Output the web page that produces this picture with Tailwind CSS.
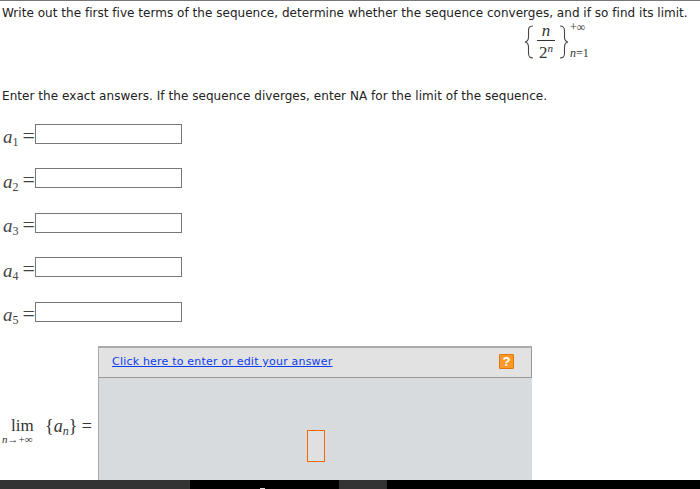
<!DOCTYPE html>
<html><head><script src="https://cdn.jsdelivr.net/npm/@tailwindcss/browser@4"></script></head>
<body class="m-0 bg-white">
<div class="w-[700px] h-[489px] overflow-hidden flex flex-col font-['DejaVu_Sans',sans-serif] text-[12px] text-[#222] tracking-[0.05px]">
  <div class="h-px bg-[#777] shrink-0"></div>
  <p class="pl-[2px] h-[21px] pt-[5px] leading-[15px] whitespace-nowrap tracking-[0.03px]">Write out the first five terms of the sequence, determine whether the sequence converges, and if so find its limit.</p>
  <div class="h-[40px] pl-[524px] flex items-start font-['Liberation_Serif',serif] text-[#333] tracking-normal shrink-0">
    <svg class="w-[10px] h-[34px] mt-[3px] shrink-0" viewBox="0 0 10 34" fill="none" stroke="#444" stroke-width="1.1"><path d="M9 1C5 1 4.5 3 4.5 6V12C4.5 15 3.5 16.5 1 17C3.5 17.5 4.5 19 4.5 22V28C4.5 31 5 33 9 33"/></svg>
    <span class="flex flex-col items-center w-[18px] text-[17px] leading-[16px] ml-[3px] mt-[1px] shrink-0">
      <i>n</i>
      <span class="border-t border-[#333] w-[18px] text-center mt-[1px] pt-[4px] whitespace-nowrap">2<i class="text-[11px] align-[6px] leading-[0]">n</i></span>
    </span>
    <svg class="w-[10px] h-[34px] mt-[3px] ml-[4px] shrink-0" viewBox="0 0 10 34" fill="none" stroke="#444" stroke-width="1.1"><path d="M1 1C5 1 5.5 3 5.5 6V12C5.5 15 6.5 16.5 9 17C6.5 17.5 5.5 19 5.5 22V28C5.5 31 5 33 1 33"/></svg>
    <span class="flex flex-col text-[12px] leading-[12px] h-[38px] -mt-[1px] justify-between whitespace-nowrap ml-[1px] shrink-0">
      <span>+∞</span><span><i>n</i>=1</span>
    </span>
  </div>
  <p class="pl-[2px] mt-[27px] h-[15px] leading-[15px] whitespace-nowrap">Enter the exact answers. If the sequence diverges, enter NA for the limit of the sequence.</p>
  <div class="mt-[19.75px] flex flex-col gap-[24.5px] shrink-0 tracking-normal">
    <div class="flex items-center h-[20px] font-['Liberation_Serif',serif] text-[#444] text-[19px]"><span class="w-[22px] pl-[3px] mt-[7px]"><i>a</i><sub class="text-[12px] leading-[0]">1</sub></span><span class="w-[13px] pl-[1px] mt-[4px] text-[20px] scale-x-[1.1]">=</span><div class="w-[147px] h-[20px] border border-[#777] bg-white"></div></div>
    <div class="flex items-center h-[20px] font-['Liberation_Serif',serif] text-[#444] text-[19px]"><span class="w-[22px] pl-[3px] mt-[7px]"><i>a</i><sub class="text-[12px] leading-[0]">2</sub></span><span class="w-[13px] pl-[1px] mt-[4px] text-[20px] scale-x-[1.1]">=</span><div class="w-[147px] h-[20px] border border-[#777] bg-white"></div></div>
    <div class="flex items-center h-[20px] font-['Liberation_Serif',serif] text-[#444] text-[19px]"><span class="w-[22px] pl-[3px] mt-[7px]"><i>a</i><sub class="text-[12px] leading-[0]">3</sub></span><span class="w-[13px] pl-[1px] mt-[4px] text-[20px] scale-x-[1.1]">=</span><div class="w-[147px] h-[20px] border border-[#777] bg-white"></div></div>
    <div class="flex items-center h-[20px] font-['Liberation_Serif',serif] text-[#444] text-[19px]"><span class="w-[22px] pl-[3px] mt-[7px]"><i>a</i><sub class="text-[12px] leading-[0]">4</sub></span><span class="w-[13px] pl-[1px] mt-[4px] text-[20px] scale-x-[1.1]">=</span><div class="w-[147px] h-[20px] border border-[#777] bg-white"></div></div>
    <div class="flex items-center h-[20px] font-['Liberation_Serif',serif] text-[#444] text-[19px]"><span class="w-[22px] pl-[3px] mt-[7px]"><i>a</i><sub class="text-[12px] leading-[0]">5</sub></span><span class="w-[13px] pl-[1px] mt-[4px] text-[20px] scale-x-[1.1]">=</span><div class="w-[147px] h-[20px] border border-[#777] bg-white"></div></div>
  </div>
  <div class="mt-[24.25px] flex flex-1 min-h-0 tracking-normal">
    <div class="w-[98px] shrink-0 font-['Liberation_Serif',serif] text-[#333] relative">
      <div class="absolute left-[2px] top-[72px] w-[44px]">
        <div class="text-[17px] leading-[16px] pl-[9px]">lim</div>
        <div class="text-[11px] leading-[10px] whitespace-nowrap">
          <i>n</i>→+∞</div>
      </div>
      <span class="absolute left-[45px] top-[71px] text-[18px] leading-[18px] whitespace-nowrap">{<i>a</i><sub class="text-[12px] leading-[0]"><i>n</i></sub>}&nbsp;=</span>
    </div>
    <div class="w-[434px] border-l border-t-2 border-[#aaa] flex flex-col bg-[#d8dbde]">
      <div class="h-[30px] bg-[#e2e2e2] border-b border-r border-[#999] flex items-center justify-between pl-[13px] pr-[17px] pb-[2px] shrink-0">
        <a class="text-[#0a3cf0] underline text-[11px] tracking-[0.2px] leading-[15px] font-['DejaVu_Sans',sans-serif]">Click here to enter or edit your answer</a>
        <span class="w-[15px] h-[15px] bg-[#fb9a2a] border border-[#e07800] rounded-[1px] flex items-center justify-center text-white text-[13px] font-bold leading-none font-['Liberation_Sans',sans-serif]">?</span>
      </div>
      <div class="flex-1 pl-[208px] pt-[52px]">
        <div class="w-[18px] h-[32px] border border-[#f56a00] bg-[#e0e0e0]"></div>
      </div>
    </div>
  </div>
  <div class="h-[9px] shrink-0 flex bg-black relative">
    <div class="w-[190px] bg-[#333]"></div>
    <div class="w-[149px]"></div>
    <div class="w-[48px] bg-[#333]"></div>
    <div class="absolute left-[260px] top-[8px] w-[5px] h-px bg-[#ddd]"></div>
  </div>
</div>
</body></html>
